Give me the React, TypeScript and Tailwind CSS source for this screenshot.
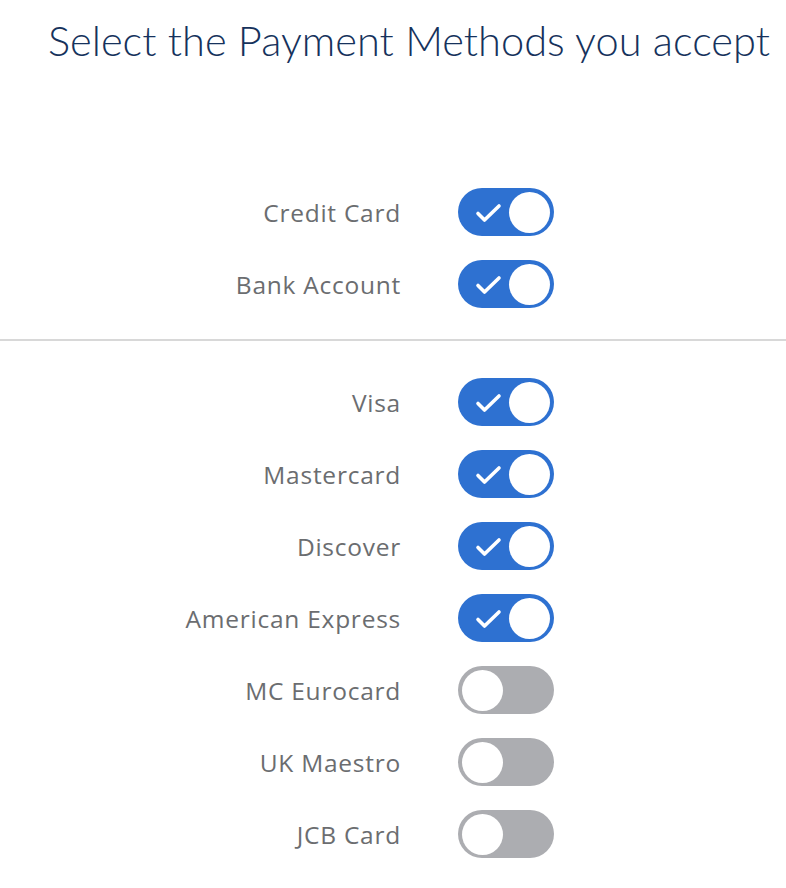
import React from "react";

type Item = { label: string; on: boolean };

const top: Item[] = [
  { label: "Credit Card", on: true },
  { label: "Bank Account", on: true },
];

const cards: Item[] = [
  { label: "Visa", on: true },
  { label: "Mastercard", on: true },
  { label: "Discover", on: true },
  { label: "American Express", on: true },
  { label: "MC Eurocard", on: false },
  { label: "UK Maestro", on: false },
  { label: "JCB Card", on: false },
];

function Toggle({ on }: { on: boolean }) {
  return (
    <div
      className={
        on
          ? "relative w-[96px] h-[48px] rounded-full bg-[#2e71d1] flex items-center justify-end pr-[4px]"
          : "relative w-[96px] h-[48px] rounded-full bg-[#acadb1] flex items-center justify-start pl-[4px]"
      }
    >
      {on && (
        <svg
          className="absolute left-[17px] top-[15px]"
          width="28"
          height="20"
          viewBox="0 0 28 20"
          fill="none"
        >
          <path
            d="M3 10.5 L9.5 17 L24 3"
            stroke="white"
            strokeWidth="3.6"
            strokeLinecap="round"
            strokeLinejoin="round"
          />
        </svg>
      )}
      <div className="w-[41px] h-[41px] rounded-full bg-white" />
    </div>
  );
}

function Row({ item }: { item: Item }) {
  return (
    <div className="flex items-center h-[48px]">
      <div
        className="w-[401px] text-right text-[24.5px] tracking-[0.75px] text-[#6b6d70] leading-none pt-[3px] whitespace-nowrap"
        style={{ fontFamily: "'Open Sans', Lato, sans-serif" }}
      >
        {item.label}
      </div>
      <div className="ml-[57px]">
        <Toggle on={item.on} />
      </div>
    </div>
  );
}

export default function App() {
  return (
    <div
      className="w-[786px] h-[888px] bg-white overflow-hidden"
      style={{ fontFamily: "Lato, 'Open Sans', sans-serif" }}
    >
      <h1 className="pl-[48px] pt-[12px] text-[41.6px] font-light text-[#16325c] leading-[56px] whitespace-nowrap">
        Select the Payment Methods you accept
      </h1>
      <div className="mt-[120px] flex flex-col gap-[24px]">
        {top.map((i) => (
          <Row key={i.label} item={i} />
        ))}
      </div>
      <div className="mt-[31px] h-[2px] bg-[#d8d8d8]" />
      <div className="mt-[37px] flex flex-col gap-[24px]">
        {cards.map((i) => (
          <Row key={i.label} item={i} />
        ))}
      </div>
    </div>
  );
}
